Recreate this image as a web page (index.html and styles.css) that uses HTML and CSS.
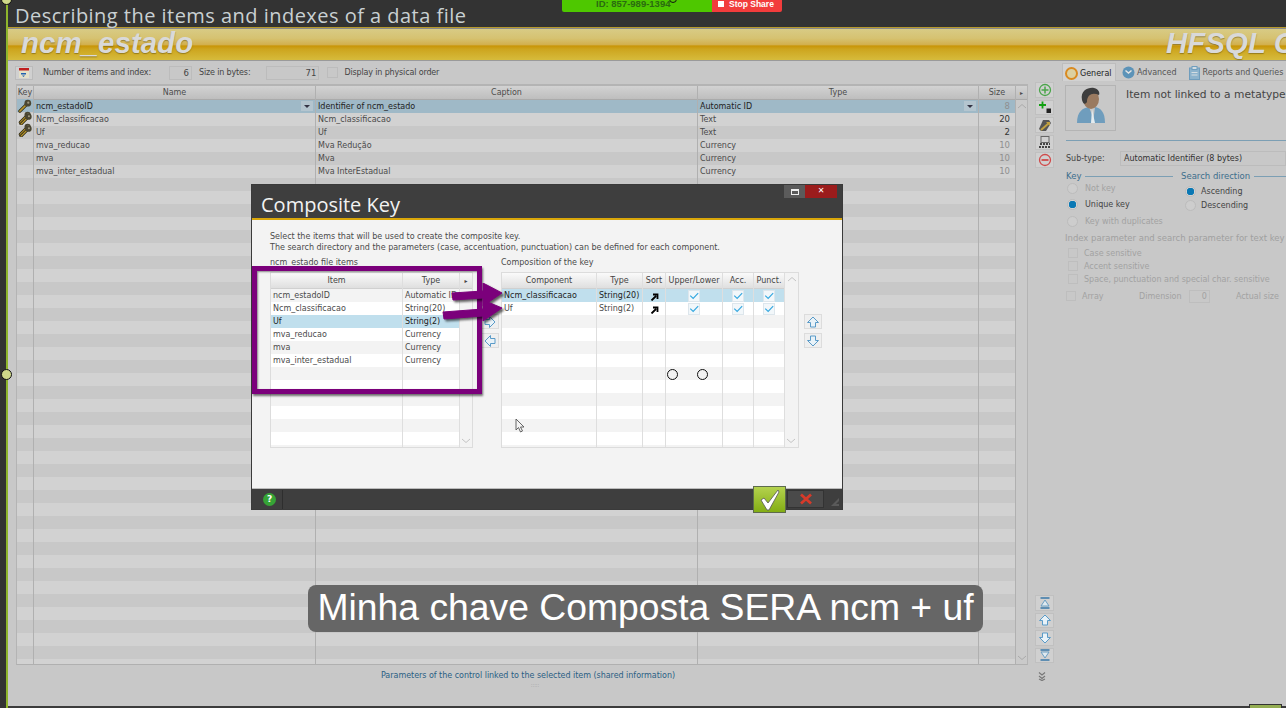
FILE: index.html
```html
<!DOCTYPE html>
<html>
<head>
  <link rel="stylesheet" href="styles.css">
</head>
<body>
  <svg width="0" height="0" class="defs">
    <defs>
      <g id="key">
        <path d="M2 13 L9 6" stroke="#2e2a18" stroke-width="3.4" stroke-linecap="round"/>
        <path d="M2 13 L9 6" stroke="#b8962c" stroke-width="1.6" stroke-linecap="round"/>
        <circle cx="10.5" cy="4.5" r="3.6" fill="#4a4632"/>
        <circle cx="11" cy="4" r="1.2" fill="#a09a80"/>
      </g>
      <g id="keys">
        <use href="#key"/>
        <use href="#key" y="2" x="1"/>
      </g>
      <path id="up" d="M7 2 L12.5 7.5 H9.5 V12 H4.5 V7.5 H1.5 Z" fill="#e8f2f8" stroke="#5a9bc8" stroke-width="1"/>
      <path id="down" d="M7 12 L12.5 6.5 H9.5 V2 H4.5 V6.5 H1.5 Z" fill="#e8f2f8" stroke="#5a9bc8" stroke-width="1"/>
      <path id="tick" d="M1.500 4.500 L5 8 L11 1.500" fill="none" stroke="#35a8e0" stroke-width="1.4"/>
      <path id="sort" d="M1.5 8.5 L6 4 M3 2.5 H7.5 V7" fill="none" stroke="#000" stroke-width="1.8"/>
      <path id="chev-up" d="M1 5 L5 1.5 L9 5" fill="none" stroke="currentColor" stroke-width="1"/>
      <path id="chev-down" d="M1 1 L5 4.5 L9 1" fill="none" stroke="currentColor" stroke-width="1"/>
    </defs>
  </svg>

  <div class="app">
    <div class="edge"></div>
    <div class="main">
      <div class="titlebar">Describing the items and indexes of a data file</div>
      <div class="banner">
        <span>ncm_estado</span>
        <span class="banner-right">HFSQL C</span>
      </div>

      <div class="workspace">
        <div class="left">
          <div class="toolbar">
            <button class="tool-btn">
              <svg width="12" height="12" viewBox="0 0 12 12"><rect x="1" y="1" width="10" height="10" fill="#e4e0c8"/><rect x="1" y="1" width="10" height="2.5" fill="#c02020"/><rect x="3" y="6" width="5" height="1.5" fill="#2060b0"/><path d="M4 8.5h3L5.500 10z" fill="#2060b0"/></svg>
            </button>
            <span class="tool-label first">Number of items and index:</span>
            <span class="tool-field small">6</span>
            <span class="tool-label">Size in bytes:</span>
            <span class="tool-field wide">71</span>
            <span class="tool-check"></span>
            <span class="tool-label last">Display in physical order</span>
          </div>

          <div class="grid">
            <div class="col c-key">
              <div class="head">Key</div>
              <div class="cell sel key-cell"><svg width="14" height="14" viewBox="0 0 15 15"><use href="#key"/></svg></div>
              <div class="cell key-cell"><svg width="14" height="14" viewBox="0 0 15 16"><use href="#keys"/></svg></div>
              <div class="cell key-cell"><svg width="14" height="14" viewBox="0 0 15 16"><use href="#keys"/></svg></div>
            </div>
            <div class="col c-name">
              <div class="head">Name</div>
              <div class="cell sel strong">ncm_estadoID<span class="drop"></span></div>
              <div class="cell">Ncm_classificacao</div>
              <div class="cell">Uf</div>
              <div class="cell">mva_reducao</div>
              <div class="cell">mva</div>
              <div class="cell">mva_inter_estadual</div>
            </div>
            <div class="col c-caption">
              <div class="head">Caption</div>
              <div class="cell sel strong">Identifier of ncm_estado</div>
              <div class="cell">Ncm_classificacao</div>
              <div class="cell">Uf</div>
              <div class="cell">Mva Redução</div>
              <div class="cell">Mva</div>
              <div class="cell">Mva InterEstadual</div>
            </div>
            <div class="col c-type">
              <div class="head">Type</div>
              <div class="cell sel strong">Automatic ID<span class="drop"></span></div>
              <div class="cell">Text</div>
              <div class="cell">Text</div>
              <div class="cell">Currency</div>
              <div class="cell">Currency</div>
              <div class="cell">Currency</div>
            </div>
            <div class="col c-size">
              <div class="head">Size</div>
              <div class="cell sel num faded">8</div>
              <div class="cell num">20</div>
              <div class="cell num">2</div>
              <div class="cell num faded">10</div>
              <div class="cell num faded">10</div>
              <div class="cell num faded">10</div>
            </div>
            <div class="col c-scroll">
              <div class="head more">&#9656;</div>
              <svg class="chev" width="10" height="6" viewBox="0 0 10 6"><use href="#chev-up"/></svg>
              <svg class="chev bottom" width="10" height="6" viewBox="0 0 10 6"><use href="#chev-down"/></svg>
            </div>
          </div>
        </div>

        <div class="side-btns">
          <div class="btn-group">
            <button class="side-btn"><svg width="14" height="14" viewBox="0 0 14 14"><circle cx="7" cy="7" r="5.500" fill="none" stroke="#4aa54a" stroke-width="1.300"/><path d="M3.500 7h7M7 3.500v7" stroke="#4aa54a" stroke-width="1.500"/></svg></button>
            <button class="side-btn"><svg width="14" height="14" viewBox="0 0 14 14"><path d="M1 5h7M4.500 1.500v7" stroke="#10a010" stroke-width="1.800"/><rect x="8.500" y="8.500" width="4.500" height="4.500" fill="#222"/></svg></button>
            <button class="side-btn"><svg width="14" height="14" viewBox="0 0 14 14"><path d="M1 11 L5 2 H11 L13 5 L8 13 H3z" fill="#555"/><path d="M3 12 L11 5" stroke="#c0a040" stroke-width="2"/><path d="M8 4h4v4z" fill="#c0a040"/></svg></button>
            <button class="side-btn"><svg width="14" height="14" viewBox="0 0 14 14"><rect x="3" y="1.500" width="8" height="6" fill="none" stroke="#666"/><path d="M1 12h12M2 9h10" stroke="#444" stroke-width="2" stroke-dasharray="2 1"/></svg></button>
            <button class="side-btn"><svg width="14" height="14" viewBox="0 0 14 14"><circle cx="7" cy="7" r="5.500" fill="none" stroke="#d04a4a" stroke-width="1.300"/><path d="M3.500 7h7" stroke="#d04a4a" stroke-width="1.800"/></svg></button>
          </div>
          <div class="btn-group">
            <button class="side-btn"><svg width="14" height="14" viewBox="0 0 14 14"><path d="M2.500 2h9M2.500 12h9" stroke="#3a78a8" stroke-width="1.500"/><path d="M7 4 L11 10 H3 Z" fill="#dfe9ef" stroke="#6a9ec2"/></svg></button>
            <button class="side-btn"><svg width="14" height="14" viewBox="0 0 14 14"><use href="#up"/></svg></button>
            <button class="side-btn"><svg width="14" height="14" viewBox="0 0 14 14"><use href="#down"/></svg></button>
            <button class="side-btn"><svg width="14" height="14" viewBox="0 0 14 14"><path d="M2.500 2h9M2.500 12h9" stroke="#3a78a8" stroke-width="1.500"/><path d="M7 10 L11 4 H3 Z" fill="#dfe9ef" stroke="#6a9ec2"/></svg></button>
          </div>
        </div>

        <div class="panel">
          <div class="tabs">
            <div class="tab active"><span class="tab-ring"></span>General</div>
            <div class="tab adv"><svg width="13" height="13" viewBox="0 0 13 13"><circle cx="6.500" cy="6.500" r="6" fill="#5c93b8"/><path d="M3.500 4.500 L6.500 7 L9.500 4.500" fill="none" stroke="#e4e4e4" stroke-width="1.500"/></svg>Advanced</div>
            <div class="tab rep"><svg width="11" height="14" viewBox="0 0 11 14"><rect x=".5" y="2" width="10" height="11.500" fill="#8db3cc" stroke="#6f9dbd"/><rect x="3" y=".5" width="5" height="3" fill="#d4dde2" stroke="#6f9dbd"/><path d="M2.500 6.500h6M2.500 9h6" stroke="#d4dde2"/></svg>Reports and Queries</div>
          </div>
          <div class="meta">
            <div class="photo">
              <svg width="32" height="38" viewBox="0 0 32 38">
                <path d="M2 36 C2 24 8 21 14 20 L20 36z" fill="#6f9dbd"/>
                <path d="M30 36 C30 24 25 21 20 20 L18 36z" fill="#6f9dbd"/>
                <path d="M17 22 L20 36 H16z" fill="#e4ecf0"/>
                <ellipse cx="16" cy="12" rx="8" ry="10" fill="#9a7a60"/>
                <path d="M7 13 C5 3 14 0 19 1 C24 2 25 6 24 8 C18 5 12 7 12 15 C10 18 8 17 7 13z" fill="#3d3d3d"/>
              </svg>
            </div>
            <div class="meta-text">Item not linked to a metatype</div>
          </div>
          <div class="rule"></div>
          <div class="subtype">
            <span class="subtype-label">Sub-type:</span>
            <div class="select">Automatic Identifier (8 bytes)</div>
          </div>
          <div class="options">
            <div class="opt-col key-col">
              <div class="legend">Key<i></i></div>
              <div class="radio off"><b></b>Not key</div>
              <div class="radio on"><b></b>Unique key</div>
              <div class="radio off"><b></b>Key with duplicates</div>
            </div>
            <div class="opt-col dir-col">
              <div class="legend">Search direction<i></i></div>
              <div class="radio on tight"><b></b>Ascending</div>
              <div class="radio tight"><b></b>Descending</div>
            </div>
          </div>
          <div class="index-title">Index parameter and search parameter for text key</div>
          <div class="check"><b></b>Case sensitive</div>
          <div class="check"><b></b>Accent sensitive</div>
          <div class="check"><b></b>Space, punctuation and special char. sensitive</div>
          <div class="array-row">
            <div class="check array"><b></b>Array</div>
            <span class="dim-label">Dimension</span>
            <span class="dim-field">0</span>
            <span class="dim-label actual">Actual size</span>
          </div>
        </div>
      </div>

      <div class="footer">
        <div class="footer-note">
          <span>Parameters of the control linked to the selected item (shared information)</span>
          <em>:::::</em>
        </div>
        <svg class="double-chev" width="10" height="10" viewBox="0 0 10 10"><path d="M2 1.500l3 2.500 3-2.500M2 5l3 2.500 3-2.500M2 8l3 1.500 3-1.500" fill="none" stroke="#777" stroke-width="1.200"/></svg>
      </div>
      <div class="bottom-line"><span></span></div>
    </div>
  </div>

  <!-- screen share bar -->
  <div class="share">
    <div class="share-id">ID: 857-989-1394</div>
    <div class="share-stop"><i></i>Stop Share</div>
  </div>

  <!-- dialog -->
  <div class="dialog">
    <div class="dialog-top">
      <div class="win-btns">
        <span class="win-max"><i></i></span>
        <span class="win-close">&#10005;</span>
      </div>
      <h1>Composite Key</h1>
    </div>
    <div class="dialog-body">
      <p>Select the items that will be used to create the composite key.<br>The search directory and the parameters (case, accentuation, punctuation) can be defined for each component.</p>
      <div class="lists">
        <div class="list-left">
          <div class="list-title">ncm_estado file items</div>
          <div class="dgrid">
            <div class="dcol d-item">
              <div class="dhead">Item</div>
              <div class="dcell">ncm_estadoID</div>
              <div class="dcell">Ncm_classificacao</div>
              <div class="dcell dsel">Uf</div>
              <div class="dcell">mva_reducao</div>
              <div class="dcell">mva</div>
              <div class="dcell">mva_inter_estadual</div>
            </div>
            <div class="dcol d-type">
              <div class="dhead">Type</div>
              <div class="dcell">Automatic ID</div>
              <div class="dcell">String(20)</div>
              <div class="dcell dsel">String(2)</div>
              <div class="dcell">Currency</div>
              <div class="dcell">Currency</div>
              <div class="dcell">Currency</div>
            </div>
            <div class="dscroll">
              <div class="dhead more">&#9656;</div>
              <svg class="chev bottom" width="10" height="6" viewBox="0 0 10 6"><use href="#chev-down"/></svg>
            </div>
          </div>
        </div>
        <div class="move-btns">
          <button class="move-btn"><svg width="14" height="14" viewBox="0 0 14 14"><path d="M12 7 L6.500 1.500 V4.500 H2 V9.500 H6.500 V12.500 Z" fill="#e8f2f8" stroke="#5a9bc8"/></svg></button>
          <button class="move-btn"><svg width="14" height="14" viewBox="0 0 14 14"><path d="M2 7 L7.500 1.500 V4.500 H12 V9.500 H7.500 V12.500 Z" fill="#e8f2f8" stroke="#5a9bc8"/></svg></button>
        </div>
        <div class="list-right">
          <div class="list-title">Composition of the key</div>
          <div class="dgrid">
            <div class="dcol d-comp">
              <div class="dhead">Component</div>
              <div class="dcell dsel">Ncm_classificacao</div>
              <div class="dcell">Uf</div>
            </div>
            <div class="dcol d-ctype">
              <div class="dhead">Type</div>
              <div class="dcell dsel">String(20)</div>
              <div class="dcell">String(2)</div>
            </div>
            <div class="dcol d-sort">
              <div class="dhead">Sort</div>
              <div class="dcell dsel mid"><svg width="9" height="9" viewBox="0 0 9 9"><use href="#sort"/></svg></div>
              <div class="dcell mid"><svg width="9" height="9" viewBox="0 0 9 9"><use href="#sort"/></svg></div>
            </div>
            <div class="dcol d-upper">
              <div class="dhead">Upper/Lower</div>
              <div class="dcell dsel mid"><span class="tick"><svg width="12" height="10" viewBox="0 0 12 10"><use href="#tick"/></svg></span></div>
              <div class="dcell mid"><span class="tick"><svg width="12" height="10" viewBox="0 0 12 10"><use href="#tick"/></svg></span></div>
            </div>
            <div class="dcol d-acc">
              <div class="dhead">Acc.</div>
              <div class="dcell dsel mid"><span class="tick"><svg width="12" height="10" viewBox="0 0 12 10"><use href="#tick"/></svg></span></div>
              <div class="dcell mid"><span class="tick"><svg width="12" height="10" viewBox="0 0 12 10"><use href="#tick"/></svg></span></div>
            </div>
            <div class="dcol d-punct">
              <div class="dhead">Punct.</div>
              <div class="dcell dsel mid"><span class="tick"><svg width="12" height="10" viewBox="0 0 12 10"><use href="#tick"/></svg></span></div>
              <div class="dcell mid"><span class="tick"><svg width="12" height="10" viewBox="0 0 12 10"><use href="#tick"/></svg></span></div>
            </div>
            <div class="dscroll right">
              <svg class="chev" width="10" height="6" viewBox="0 0 10 6"><use href="#chev-up"/></svg>
              <svg class="chev bottom" width="10" height="6" viewBox="0 0 10 6"><use href="#chev-down"/></svg>
            </div>
          </div>
        </div>
        <div class="move-btns updown">
          <button class="move-btn"><svg width="14" height="14" viewBox="0 0 14 14"><use href="#up"/></svg></button>
          <button class="move-btn"><svg width="14" height="14" viewBox="0 0 14 14"><use href="#down"/></svg></button>
        </div>
      </div>
    </div>
    <div class="dialog-foot">
      <span class="help">?</span>
      <span class="foot-sep"></span>
      <button class="ok"><svg width="24" height="22" viewBox="0 0 24 22"><path d="M3 11 L6 9 L10 14 L20 1 L21 3 L11 21 H9z" fill="#fff" stroke="#555" stroke-width=".8"/></svg></button>
      <button class="cancel"><svg width="14" height="12" viewBox="0 0 14 12"><path d="M2 1.500 L12 10.500 M12 1.500 L2 10.500" stroke="#d63a2a" stroke-width="2.800"/></svg></button>
      <svg class="grip" width="9" height="9" viewBox="0 0 9 9"><path d="M8 0 V8 H0 Z" fill="#5a5a5a"/><path d="M8 3 V6 H5z" fill="#3f3f3f"/></svg>
    </div>
  </div>

  <!-- annotations drawn over the recording -->
  <div class="mark-box"></div>
  <svg class="mark-arrows" width="66" height="44" viewBox="0 0 66 44">
    <path d="M11 10 L42 8 L42 0 L61 10 L42 23 L42 15 L12 17 Z" fill="#7b007b" stroke="#7b007b" stroke-linejoin="round"/>
    <path d="M2 29 L42 26 L42 17 L61 25 L42 38 L42 33 L3 36 Z" fill="#7b007b" stroke="#7b007b" stroke-linejoin="round"/>
  </svg>
  <span class="ring r1"></span>
  <span class="ring r2"></span>
  <span class="ring r3"></span>
  <span class="ring r4"></span>
  <span class="ring r5"></span>
  <svg class="cursor" width="12" height="16" viewBox="0 0 12 16"><path d="M1 1 V12 L3.500 9.500 L5.500 14 L7.500 13 L5.500 9 H9 Z" fill="#f4f4f4" stroke="#555" stroke-width=".9"/></svg>
  <div class="caption">Minha chave Composta SERA ncm + uf</div>
</body>
</html>
```

FILE: styles.css
```css
* {
  box-sizing: border-box;
}

body {
  margin: 0;
  width: 1286px;
  height: 708px;
  overflow: hidden;
  position: relative;
  font-family: "DejaVu Sans", sans-serif;
  font-size: 8px;
  color: #444;
  background: #c8c8c8;
}

button {
  padding: 0;
  font: inherit;
}

.defs {
  position: absolute;
}

.app {
  display: flex;
  height: 708px;
}

.edge {
  width: 8px;
  background: #333;
  border-right: 2px solid #8fb52c;
  flex: none;
}

.main {
  flex: 1;
  min-width: 0;
  display: flex;
  flex-direction: column;
}

.titlebar {
  height: 28px;
  background: #333;
  border-bottom: 1px solid #b89a2c;
  padding: 4px 0 0 7px;
  font-family: "Open Sans", sans-serif;
  font-size: 20px;
  line-height: 24px;
  letter-spacing: 0.47px;
  color: #c9d0d2;
  white-space: nowrap;
  flex: none;
}

.banner {
  height: 33px;
  border-top: 1px solid #8a8a8a;
  border-bottom: 1px solid #9a9a9a;
  background: linear-gradient(180deg, #d8cb85 0%, #d6c271 30%, #d2b04e 50%, #c99507 55%, #cda51e 65%, #d6bb3c 100%);
  display: flex;
  justify-content: space-between;
  padding: 0 0 0 13px;
  font-family: "Liberation Sans", sans-serif;
  font-weight: bold;
  font-style: italic;
  font-size: 29.500px;
  line-height: 28px;
  color: #d9d9d9;
  text-shadow: 0 1px 1px rgba(110, 90, 20, 0.6);
  white-space: nowrap;
  flex: none;
}

.banner-right {
  width: 120px;
}

.workspace {
  flex: 1;
  min-height: 0;
  display: flex;
}

.left {
  width: 1020px;
  flex: none;
  display: flex;
  flex-direction: column;
}

.toolbar {
  height: 23px;
  display: flex;
  align-items: center;
  padding: 0 0 0 7px;
  flex: none;
}

.tool-btn {
  width: 18px;
  height: 14px;
  background: #d0d0d0;
  border: 1px solid #bbb;
  display: flex;
  align-items: center;
  justify-content: center;
}

.tool-label {
  margin-left: 7px;
  white-space: nowrap;
  letter-spacing: -0.15px;
}

.tool-label.first {
  margin-left: 10px;
}

.tool-label.last {
  margin-left: 1px;
}

.tool-field {
  height: 14px;
  line-height: 12px;
  border: 1px solid #bcbcbc;
  text-align: right;
  padding-right: 2px;
  margin-left: 18px;
  font-size: 8.500px;
}

.tool-field.small {
  width: 23px;
}

.tool-field.wide {
  width: 53px;
  margin-left: 16px;
}

.tool-check {
  width: 11px;
  height: 11px;
  border: 1px solid #bcbcbc;
  margin-left: 8px;
  margin-right: 5px;
}

.grid {
  flex: 1;
  min-height: 0;
  margin-left: 8px;
  display: flex;
  border: 1px solid #b4b4b4;
  border-top-width: 2px;
  border-bottom: 1px solid #b0b0b0;
}

.col {
  flex: none;
  border-right: 1px solid #b0b0b0;
  background: repeating-linear-gradient(180deg, #c8c8c8 0 13px, #d2d2d2 13px 26px);
  background-position: 0 14px;
  background-repeat: no-repeat;
  background-size: 100% calc(100% - 14px);
}

.c-key { width: 17px; }
.c-name { width: 282px; }
.c-caption { width: 382px; }
.c-type { width: 281px; }
.c-size { width: 37px; }

.c-scroll {
  flex: 1;
  border-right: 0;
  background: #cacaca;
  position: relative;
  color: #aaa;
}

.head {
  height: 14px;
  line-height: 14px;
  text-align: center;
  color: #4c4c4c;
  background: linear-gradient(180deg, #d2d2d2, #bebebe);
  border-bottom: 1px solid #aaa;
}

.head.more {
  font-size: 6px;
}

.cell {
  height: 13px;
  line-height: 13px;
  padding-left: 2px;
  white-space: nowrap;
  position: relative;
  color: #4a4a4a;
}

.cell.sel {
  background: #9fb9c7;
}

.cell.strong {
  color: #222;
}

.cell.num {
  text-align: right;
  padding-right: 5px;
  font-size: 8.500px;
  color: #333;
}

.cell.faded {
  color: #8f8f8f;
}

.key-cell {
  padding: 0 0 0 1px;
  overflow: visible;
}

.key-cell svg {
  display: block;
  margin-top: -1px;
}

.drop {
  position: absolute;
  right: 2px;
  top: 1px;
  width: 12px;
  height: 10px;
  background: #b4c5cf;
}

.drop::after {
  content: "";
  position: absolute;
  left: 3px;
  top: 4px;
  border: 3px solid transparent;
  border-top-color: #334;
  border-bottom: 0;
}

.chev {
  display: block;
  margin: 3px auto 0;
  color: #aaa;
}

.chev.bottom {
  position: absolute;
  bottom: 3px;
  left: 1px;
}

.side-btns {
  width: 34px;
  flex: none;
  margin-top: 21px;
  padding: 0 0 0 7px;
  display: flex;
  flex-direction: column;
  justify-content: space-between;
  height: 581px;
}

.btn-group {
  display: flex;
  flex-direction: column;
  gap: 2px;
}

.side-btn {
  width: 19px;
  height: 15.500px;
  background: #d0d0d0;
  border: 1px solid #c0c0c0;
  display: flex;
  align-items: center;
  justify-content: center;
}

.panel {
  flex: 1;
  min-width: 0;
  padding: 2px 0 0 0;
  overflow: hidden;
  white-space: nowrap;
}

.tabs {
  display: flex;
  height: 18px;
  align-items: center;
  border-bottom: 1px solid #bdbdbd;
}

.tab {
  display: flex;
  align-items: center;
  height: 18px;
  padding: 2px 0 0 0;
  color: #555;
}

.tab.active {
  width: 54px;
  padding-left: 2px;
  gap: 2px;
  color: #222;
  background: #d2d2d2;
  border: 1px solid #bdbdbd;
  border-bottom: 0;
}

.tab.adv {
  margin-left: 6px;
  gap: 2px;
}

.tab.rep {
  margin-left: 12px;
  gap: 3px;
  letter-spacing: -0.05px;
}

.tab-ring {
  width: 13px;
  height: 13px;
  border-radius: 50%;
  border: 2.500px solid #d98a20;
  background: #dcd0a0;
  flex: none;
}

.meta {
  display: flex;
  margin: 4px 0 0 3px;
}

.photo {
  width: 51px;
  height: 46px;
  border: 1px solid #b4b4b4;
  display: flex;
  align-items: flex-end;
  justify-content: center;
  padding-bottom: 5px;
  flex: none;
}

.meta-text {
  margin: 3px 0 0 10px;
  font-size: 10.700px;
  color: #444;
}

.rule {
  height: 1px;
  background: #7c9fb4;
  margin: 9px 0 0 4px;
}

.subtype {
  display: flex;
  align-items: center;
  margin: 10px 0 0 4px;
}

.subtype-label {
  width: 54px;
}

.select {
  flex: 1;
  height: 15px;
  line-height: 13px;
  border: 1px solid #bcbcbc;
  padding-left: 3px;
  color: #333;
}

.options {
  display: flex;
  margin: 4px 0 0 4px;
}

.opt-col {
  flex: none;
}

.key-col {
  width: 115px;
}

.dir-col {
  width: 120px;
}

.legend {
  display: flex;
  align-items: center;
  height: 12px;
  color: #3d6e8c;
  font-size: 8.500px;
}

.legend i {
  flex: 1;
  height: 1px;
  background: #7c9fb4;
  margin: 0 8px 0 4px;
}

.radio {
  display: flex;
  align-items: center;
  height: 16.500px;
  color: #444;
}

.key-col .legend {
  margin-bottom: -2px;
}

.key-col .radio b {
  margin-right: 7px;
}

.radio.tight {
  height: 14.500px;
  padding-left: 3px;
}

.radio.tight.on {
  margin-top: 2px;
}

.radio.off {
  color: #a2a2a2;
}

.radio b {
  width: 11px;
  height: 11px;
  border-radius: 50%;
  border: 1px solid #bcbcbc;
  background: #cdcdcd;
  margin: 0 5px 0 1px;
  flex: none;
}

.radio.on b {
  background: radial-gradient(circle, #0a78b4 0 3.500px, #d4d4d4 4px);
}

.index-title {
  margin: 2px 0 0 3px;
  color: #a0a0a0;
  font-size: 8.500px;
  line-height: 12px;
}

.check {
  display: flex;
  align-items: center;
  height: 13px;
  color: #a2a2a2;
  margin-left: 6px;
}

.check b {
  width: 10px;
  height: 10px;
  border: 1px solid #bebebe;
  margin-right: 6px;
  flex: none;
}

.index-title + .check {
  margin-top: 3px;
}

.array-row {
  display: flex;
  align-items: center;
  margin: 4px 0 0 0;
  height: 13px;
  color: #a2a2a2;
}

.check.array {
  margin-left: 4px;
  width: 76px;
}

.dim-label {
  margin-right: 7px;
}

.dim-field {
  width: 22px;
  height: 13px;
  line-height: 11px;
  border: 1px solid #bebebe;
  text-align: right;
  padding-right: 2px;
  margin-right: 26px;
}

.footer {
  height: 41px;
  display: flex;
  flex: none;
}

.footer-note {
  width: 1040px;
  text-align: center;
  padding: 6px 0 0 0;
  color: #2b5f84;
  letter-spacing: -0.03px;
  flex: none;
}

.footer-note em {
  display: block;
  font-style: normal;
  font-size: 5px;
  line-height: 9px;
  margin-top: 1px;
  padding-left: 14px;
  color: #8c8c8c;
}

.double-chev {
  margin: 6px 0 0 -11px;
}

.bottom-line {
  height: 2px;
  background: #3c3c3c;
  position: relative;
  flex: none;
}

.bottom-line span {
  position: absolute;
  left: 1241px;
  bottom: 0;
  width: 33px;
  height: 4px;
  background: #94ad52;
  border: 1px solid #333;
  border-bottom: 0;
}

/* screen share bar */
.share {
  position: absolute;
  left: 562px;
  top: 0;
  width: 220px;
  height: 12px;
  display: flex;
  border-radius: 0 0 2px 2px;
  overflow: hidden;
  font-family: "Liberation Sans", sans-serif;
  font-weight: bold;
  font-size: 8.500px;
  line-height: 8px;
}

.share-id {
  width: 150px;
  background: #4ec800;
  color: #2a6b10;
  font-size: 9.500px;
  padding-left: 34px;
}

.share-stop {
  flex: 1;
  background: #f23c3c;
  color: #fff;
  padding-left: 6px;
  display: flex;
  align-items: flex-start;
  gap: 5px;
}

.share-stop i {
  width: 6px;
  height: 6px;
  background: #fff;
  margin-top: 1px;
}

/* dialog */
.dialog {
  position: absolute;
  left: 251px;
  top: 184px;
  width: 592px;
  height: 326px;
  display: flex;
  flex-direction: column;
  border: 1px solid #3a3a3a;
  background: #f3f3f3;
  color: #4a4a4a;
}

.dialog-top {
  height: 35px;
  background: #3e3e3e;
  border-bottom: 2px solid #d9a60a;
  flex: none;
}

.win-btns {
  display: flex;
  justify-content: flex-end;
  padding-right: 5px;
  height: 13px;
}

.win-max {
  width: 21px;
  background: #5b5b5b;
  display: flex;
  align-items: center;
  justify-content: center;
}

.win-max i {
  width: 8px;
  height: 6px;
  border: 1px solid #eee;
  border-top-width: 2px;
}

.win-close {
  width: 32px;
  background: #9b1c1c;
  color: #fff;
  font-size: 8px;
  line-height: 12px;
  text-align: center;
}

.dialog-top h1 {
  margin: -3px 0 0;
  padding: 0 0 0 9px;
  font-family: "Open Sans", sans-serif;
  font-weight: normal;
  font-size: 20px;
  line-height: 20px;
  color: #f2f2f2;
}

.dialog-body {
  flex: 1;
  min-height: 0;
  padding: 11px 0 0 18px;
}

.dialog-body p {
  margin: 0;
  line-height: 11px;
  color: #4a4a4a;
  white-space: nowrap;
}

.lists {
  display: flex;
  margin-top: 4px;
}

.list-title {
  height: 11px;
  line-height: 11px;
  margin-bottom: 4px;
}

.list-left {
  width: 203px;
  flex: none;
}

.list-right {
  width: 298px;
  flex: none;
}

.dgrid {
  height: 176px;
  display: flex;
  border: 1px solid #dcdcdc;
}

.dcol {
  flex: none;
  border-right: 1px solid #dedede;
  background: repeating-linear-gradient(180deg, #f3f3f3 0 13px, #fff 13px 26px);
  background-position: 0 16px;
  background-repeat: no-repeat;
  background-size: 100% calc(100% - 16px);
}

.d-item { width: 132px; }
.d-type { width: 57px; }
.d-comp { width: 95px; }
.d-ctype { width: 46px; }
.d-sort { width: 23px; }
.d-upper { width: 57px; }
.d-acc { width: 31px; }
.d-punct { width: 31px; }

.dscroll {
  flex: 1;
  position: relative;
  background: #f3f3f3;
  color: #bbb;
}

.dscroll .chev {
  color: #c4c4c4;
}

.dhead {
  height: 16px;
  line-height: 16px;
  text-align: center;
  white-space: nowrap;
  color: #444;
  background: linear-gradient(180deg, #fafafa, #dfdfdf);
  border-bottom: 1px solid #d0d0d0;
}

.dhead.more {
  font-size: 6px;
}

.dcell {
  height: 13px;
  line-height: 13px;
  padding-left: 2px;
  white-space: nowrap;
  overflow: hidden;
}

.dcell.dsel {
  background: #c0dfed;
  color: #222;
}

.dcell.mid {
  display: flex;
  align-items: center;
  justify-content: center;
  padding: 0;
}

.d-sort .dcell.mid svg {
  margin-top: 2px;
}

.tick {
  width: 12px;
  height: 12px;
  background: #f2f7fa;
  border: 1px solid #dde6ec;
  display: flex;
  align-items: center;
  justify-content: center;
}

.move-btns {
  width: 28px;
  flex: none;
  padding: 57px 0 0 8px;
  display: flex;
  flex-direction: column;
  gap: 4px;
}

.move-btns.updown {
  width: 40px;
  padding-left: 5px;
}

.move-btn {
  width: 18px;
  height: 15px;
  background: #efefef;
  border: 1px solid #dcdcdc;
  display: flex;
  align-items: center;
  justify-content: center;
}

.dialog-foot {
  height: 21px;
  background: #3e3e3e;
  border-top: 1px solid #bbb;
  display: flex;
  align-items: center;
  position: relative;
  flex: none;
  padding-left: 11px;
}

.help {
  width: 13px;
  height: 13px;
  border-radius: 50%;
  background: #36a336;
  color: #fff;
  font-size: 9px;
  font-weight: bold;
  line-height: 13px;
  text-align: center;
}

.foot-sep {
  width: 1px;
  height: 19px;
  background: #2e2e2e;
  margin-left: 6px;
}

.ok {
  position: absolute;
  left: 501px;
  top: -3px;
  width: 33px;
  height: 27px;
  background: linear-gradient(180deg, #b4d24e, #83ad14);
  border: 1px solid #5d6b4c;
  display: flex;
  align-items: center;
  justify-content: center;
}

.cancel {
  position: absolute;
  left: 535px;
  top: 1px;
  width: 37px;
  height: 18px;
  background: #4a4a4a;
  border: 1px solid #333;
  display: flex;
  align-items: center;
  justify-content: center;
}

.grip {
  position: absolute;
  right: 2px;
  bottom: 2px;
}

/* annotations */
.mark-box {
  position: absolute;
  left: 252px;
  top: 266px;
  width: 230px;
  height: 128px;
  border: 5px solid #7b007b;
  box-shadow: 1px 2px 2px rgba(0, 0, 0, 0.55), inset 1px 1px 2px rgba(0, 0, 0, 0.45);
}

.mark-arrows {
  position: absolute;
  left: 441px;
  top: 283px;
  filter: drop-shadow(2px 2px 1px rgba(0, 0, 0, 0.6));
}

.ring {
  position: absolute;
  width: 11px;
  height: 11px;
  border: 1px solid #111;
  border-radius: 50%;
}

.r1 { left: 667px; top: 369px; }
.r2 { left: 697px; top: 369px; }

.r3 {
  left: 1px;
  top: 369px;
  background: #cfd88a;
}

.r4 {
  left: 1px;
  top: -6px;
  background: #cfd88a;
}

.r5 {
  left: 669px;
  top: -5px;
  width: 8px;
  height: 8px;
}

.cursor {
  position: absolute;
  left: 515px;
  top: 418px;
}

.caption {
  position: absolute;
  left: 308px;
  top: 585px;
  width: 675px;
  height: 47px;
  border-radius: 8px;
  background: #666;
  color: #fff;
  font-family: "Liberation Sans", sans-serif;
  font-size: 37.300px;
  line-height: 44px;
  text-align: center;
  white-space: nowrap;
}
```
